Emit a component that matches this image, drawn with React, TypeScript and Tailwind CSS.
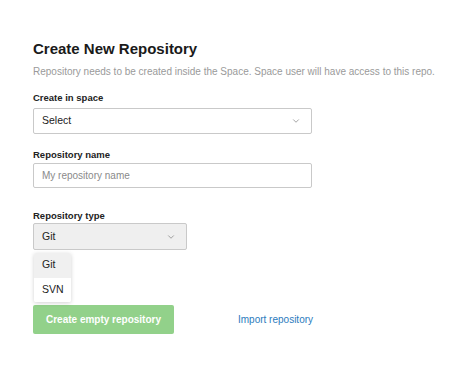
import { ChevronDown } from "lucide-react";

function Label({ children }: { children: string }) {
  return (
    <div className="text-[9.5px] font-bold leading-[12px] text-[#222]">{children}</div>
  );
}

function SelectBox({
  value,
  width,
  height,
  open,
}: {
  value: string;
  width: string;
  height: string;
  open?: boolean;
}) {
  return (
    <div
      className={`${width} ${height} flex items-center justify-between rounded-[2px] border border-[#c9c9c9] pl-[8px] pr-[10px] ${
        open ? "bg-[#efefef]" : "bg-white"
      }`}
    >
      <span className="text-[10.5px] text-[#222]">{value}</span>
      <ChevronDown className="h-[10px] w-[10px] text-[#777]" strokeWidth={1.6} />
    </div>
  );
}

export default function App() {
  const options = ["Git", "SVN"];

  return (
    <div
      className="min-h-[391px] w-[474px] bg-white px-[33px] pt-[40px]"
      style={{ fontFamily: '"Liberation Sans", Arial, sans-serif' }}
    >
      <h1 className="text-[15px] font-bold leading-[18px] text-[#1a1a1a]">
        Create New Repository
      </h1>
      <p className="mt-[8px] text-[10px] leading-[12px] text-[#9a9a9a]">
        Repository needs to be created inside the Space. Space user will have access to this repo.
      </p>

      <div className="mt-[14px]">
        <Label>Create in space</Label>
        <div className="mt-[4px]">
          <SelectBox value="Select" width="w-[279px]" height="h-[26px]" />
        </div>
      </div>

      <div className="mt-[15px]">
        <Label>Repository name</Label>
        <div className="mt-[2px] flex h-[25px] w-[279px] items-center rounded-[2px] border border-[#c9c9c9] bg-white px-[8px]">
          <span className="text-[10px] text-[#8a8a8a]">My repository name</span>
        </div>
      </div>

      <div className="mt-[22px]">
        <Label>Repository type</Label>
        <div className="relative mt-[1px]">
          <SelectBox value="Git" width="w-[154px]" height="h-[27px]" open />
          <div className="absolute left-[1px] top-[30px] w-[37px] overflow-hidden rounded-[2px] bg-white shadow-[0_1px_4px_rgba(0,0,0,0.18)]">
            {options.map((o, i) => (
              <div
                key={o}
                className={`flex h-[24.5px] items-center px-[8px] text-[10.5px] text-[#222] ${
                  i === 0 ? "bg-[#f0f0f0]" : "bg-white"
                }`}
              >
                {o}
              </div>
            ))}
          </div>
        </div>
      </div>

      <div className="mt-[55px] flex items-center">
        <button className="h-[29px] w-[141px] rounded-[2px] bg-[#92d18a] text-[10px] font-bold text-white">
          Create empty repository
        </button>
        <a className="ml-[64px] text-[10px] font-medium text-[#2b7bbd]">Import repository</a>
      </div>
    </div>
  );
}
